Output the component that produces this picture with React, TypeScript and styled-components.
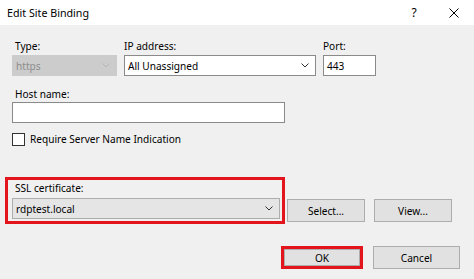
import React from 'react';
import styled, { createGlobalStyle } from 'styled-components';

const GlobalStyle = createGlobalStyle`
  html, body {
    margin: 0;
    padding: 0;
    background: #f0f0f0;
  }
  * {
    box-sizing: border-box;
  }
`;

const RED = '#e3141c';

const Window = styled.div`
  width: 474px;
  height: 279px;
  overflow: hidden;
  display: flex;
  flex-direction: column;
  font-family: 'Noto Sans', 'Liberation Sans', sans-serif;
  font-size: 10.1px;
  color: #000;
  background: #f0f0f0;
`;

const TitleBar = styled.div`
  height: 25px;
  flex: none;
  display: flex;
  align-items: center;
  padding-left: 7px;
  background: #fff;
`;

const Title = styled.span`
  flex: 1;
  font-size: 10.7px;
`;

const TitleButton = styled.span`
  width: 40px;
  display: flex;
  align-items: center;
  justify-content: center;
  font-size: 12px;
`;

const Body = styled.div`
  flex: 1;
  display: flex;
  flex-direction: column;
  padding: 14px 14px 0 12px;
`;

const Row = styled.div<{ $top?: number; $gap?: number }>`
  display: flex;
  align-items: flex-end;
  gap: ${({ $gap }) => $gap ?? 7}px;
  margin-top: ${({ $top }) => $top ?? 0}px;
`;

const Field = styled.div<{ $width: number; $top?: number }>`
  display: flex;
  flex-direction: column;
  width: ${({ $width }) => $width}px;
  margin-top: ${({ $top }) => $top ?? 0}px;
`;

const Label = styled.label<{ $indent?: number; $gap?: number }>`
  height: 14px;
  line-height: 14px;
  padding-left: ${({ $indent }) => $indent ?? 0}px;
  margin-bottom: ${({ $gap }) => $gap ?? 2}px;
  white-space: nowrap;
`;

const Combo = styled.div<{ $variant: 'edit' | 'disabled' | 'list' }>`
  height: 21px;
  display: flex;
  align-items: center;
  justify-content: space-between;
  padding: 0 6px 0 3px;
  border: 1px solid
    ${({ $variant }) =>
      $variant === 'edit' ? '#8a8a8a' : $variant === 'disabled' ? '#cccccc' : '#adadad'};
  background: ${({ $variant }) =>
    $variant === 'edit' ? '#fff' : $variant === 'disabled' ? '#cccccc' : '#e5e5e5'};
  color: ${({ $variant }) => ($variant === 'disabled' ? '#8d8d8d' : '#000')};
  white-space: nowrap;
`;

const TextBox = styled.div`
  height: 21px;
  width: 100%;
  display: flex;
  align-items: center;
  padding-left: 3px;
  border: 1px solid #8a8a8a;
  background: #fff;
`;

const CheckRow = styled.div`
  display: flex;
  align-items: center;
  gap: 5px;
  height: 14px;
  margin-top: 9px;
`;

const CheckBox = styled.span`
  width: 13px;
  height: 13px;
  border: 1px solid #333;
  background: #fff;
`;

const Highlight = styled.div`
  display: flex;
  flex-direction: column;
  width: 280px;
  margin-left: -7px;
  padding: 1px 2px 2px 4px;
  border: 3px solid ${RED};
`;

const Button = styled.div<{ $width: number; $height?: number }>`
  width: ${({ $width }) => $width}px;
  height: ${({ $height }) => $height ?? 23}px;
  display: flex;
  align-items: center;
  justify-content: center;
  border: 1px solid #adadad;
  background: #e1e1e1;
`;

const ButtonRow = styled.div`
  display: flex;
  align-items: flex-end;
  margin-bottom: 2px;
  gap: 9px;
  margin-left: 2px;
`;

const Footer = styled.div`
  display: flex;
  justify-content: flex-end;
  gap: 10px;
  margin-top: 22px;
`;

const DefaultFrame = styled.div`
  border: 3px solid ${RED};
`;

const Chevron = ({ color = '#333' }: { color?: string }) => (
  <svg width="8" height="5" viewBox="0 0 8 5">
    <path d="M0.5 0.5 L4 4 L7.5 0.5" fill="none" stroke={color} strokeWidth="1" />
  </svg>
);

const CloseIcon = () => (
  <svg width="10" height="10" viewBox="0 0 10 10">
    <path d="M0.5 0.5 L9.5 9.5 M9.5 0.5 L0.5 9.5" stroke="#000" strokeWidth="1" />
  </svg>
);

export default function App() {
  return (
    <>
      <GlobalStyle />
      <Window>
        <TitleBar>
          <Title>Edit Site Binding</Title>
          <TitleButton>?</TitleButton>
          <TitleButton>
            <CloseIcon />
          </TitleButton>
        </TitleBar>
        <Body>
          <Row>
            <Field $width={105}>
              <Label $indent={3}>Type:</Label>
              <Combo $variant="disabled">
                https
                <Chevron color="#b5b5b5" />
              </Combo>
            </Field>
            <Field $width={192}>
              <Label>IP address:</Label>
              <Combo $variant="edit">
                All Unassigned
                <Chevron />
              </Combo>
            </Field>
            <Field $width={53}>
              <Label>Port:</Label>
              <TextBox>443</TextBox>
            </Field>
          </Row>

          <Field $width={273} $top={11}>
            <Label $indent={3} $gap={1}>
              Host name:
            </Label>
            <TextBox />
          </Field>

          <CheckRow>
            <CheckBox />
            Require Server Name Indication
          </CheckRow>

          <Row $top={31} $gap={0}>
            <Highlight>
              <Label $indent={3} $gap={3}>
                SSL certificate:
              </Label>
              <Combo $variant="list">
                rdptest.local
                <Chevron />
              </Combo>
            </Highlight>
            <ButtonRow>
              <Button $width={78}>Select...</Button>
              <Button $width={78}>View...</Button>
            </ButtonRow>
          </Row>

          <Footer>
            <DefaultFrame>
              <Button $width={76} $height={17}>
                OK
              </Button>
            </DefaultFrame>
            <Button $width={87}>Cancel</Button>
          </Footer>
        </Body>
      </Window>
    </>
  );
}
